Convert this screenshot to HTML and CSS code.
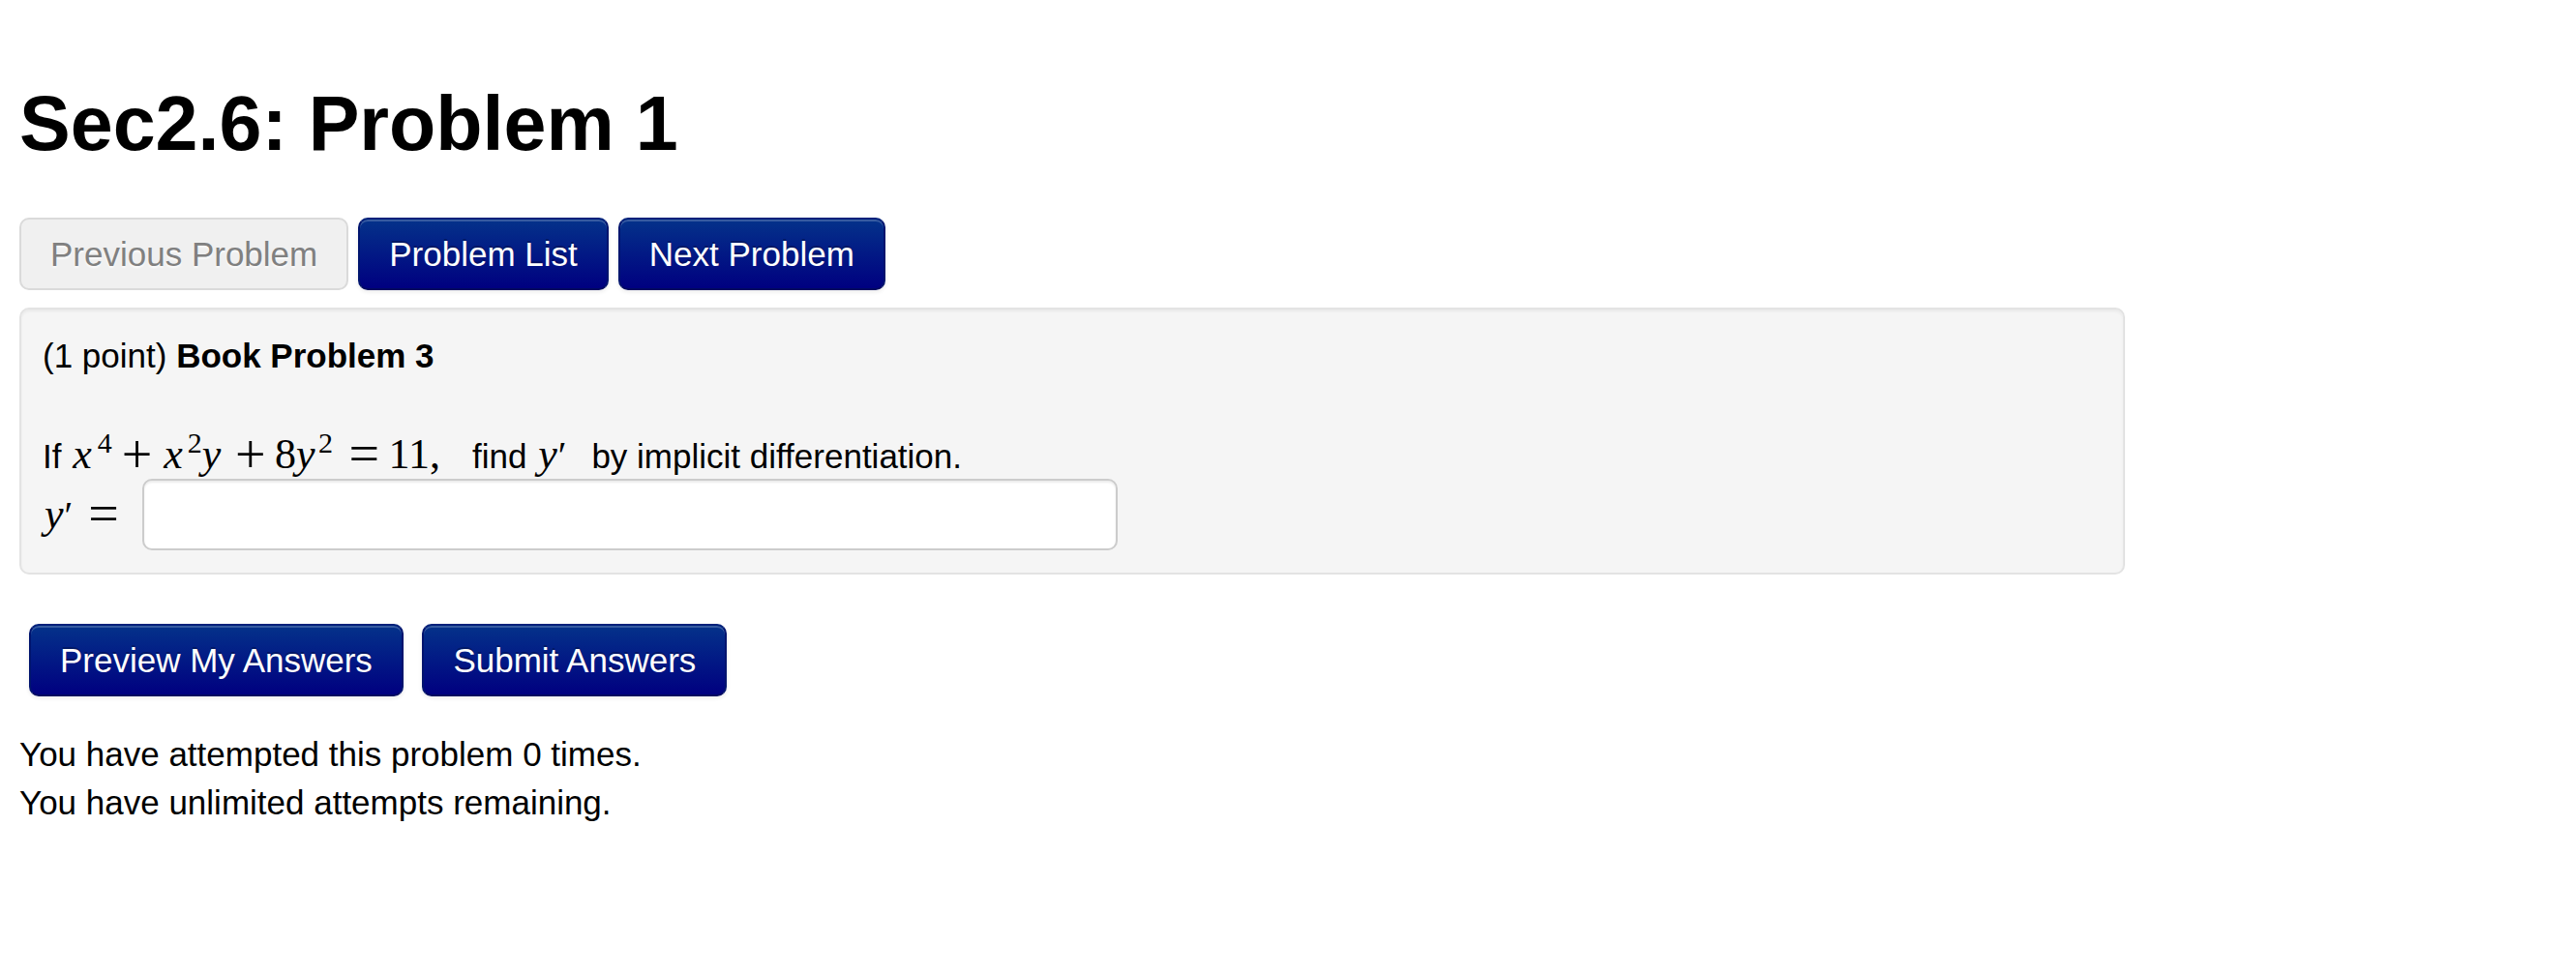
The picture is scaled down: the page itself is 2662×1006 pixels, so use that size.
FILE: index.html
```html
<!DOCTYPE html>
<html lang="en">
<head>
<meta charset="utf-8">
<title>Sec2.6: Problem 1</title>
<link rel="stylesheet" href="styles.css">
</head>
<body>
<h2 class="title">Sec2.6: Problem 1</h2>
<div class="nav">
  <span class="btn btn-disabled">Previous Problem</span>
  <span class="btn btn-primary">Problem List</span>
  <span class="btn btn-primary">Next Problem</span>
</div>
<div class="problem">
  <div class="line">(1 point) <b>Book Problem 3</b></div>
  <div class="line blank"></div>
  <div class="line stmt">If <span class="math"><i class="x1">x</i><sup class="s1">4</sup><span class="op o1">+</span><i class="x2">x</i><sup class="s2">2</sup><i class="y1">y</i><span class="op o2">+</span><span class="n8">8</span><i class="y2">y</i><sup class="s3">2</sup><span class="op rel">=</span><span class="n11">11,</span></span><span class="gap"></span>find <span class="math"><i class="y3">y</i><span class="prime">′</span></span><span class="gap2"></span>by implicit differentiation.</div>
  <div class="answer-row">
    <span class="math ans-label"><i class="y4">y</i><span class="prime">′</span><span class="op rel2">=</span></span>
    <input class="answer" type="text" aria-label="answer">
  </div>
</div>
<div class="actions">
  <span class="btn btn-primary">Preview My Answers</span>
  <span class="btn btn-primary">Submit Answers</span>
</div>
<div class="attempts">
  <div>You have attempted this problem 0 times.</div>
  <div>You have unlimited attempts remaining.</div>
</div>
</body>
</html>
```

FILE: styles.css
```css
html, body {
  margin: 0;
  background: #ffffff;
}
body {
  padding: 0 20px;
  font-family: "Liberation Sans", Arial, sans-serif;
  font-size: 35px;
  line-height: 50px;
  color: #000000;
}
.title {
  margin: 78px 0 0;
  font-size: 79px;
  line-height: 100px;
  font-weight: bold;
}
.nav {
  margin-top: 47px;
  display: flex;
  gap: 10px;
}
.btn {
  display: inline-block;
  box-sizing: border-box;
  height: 75px;
  padding: 10.5px 30px;
  border: 2px solid;
  border-radius: 10px;
  font-size: 35px;
  line-height: 50px;
  white-space: nowrap;
}
.btn-primary {
  color: #ffffff;
  background: linear-gradient(to bottom, #04328a 0%, #000080 100%);
  border-color: #00207a #00146e #000a60;
  box-shadow: inset 0 2px 0 rgba(255, 255, 255, 0.2), 0 2px 4px rgba(0, 0, 0, 0.08);
  text-shadow: 0 -2px 0 rgba(0, 0, 0, 0.25);
}
.btn-disabled {
  color: #808080;
  background: #f0f0f0;
  border-color: #dadada;
  text-shadow: 0 2px 2px rgba(255, 255, 255, 0.75);
}
.problem {
  margin-top: 18px;
  box-sizing: border-box;
  width: 2176px;
  padding: 23px 22px 23px 22px;
  background: #f5f5f5;
  border: 2px solid #e3e3e3;
  border-radius: 10px;
  box-shadow: inset 0 2px 3px rgba(0, 0, 0, 0.05);
}
.line {
  height: 50px;
  white-space: nowrap;
}
.blank {
  height: 52px;
}
.math {
  font-family: "Liberation Serif", "DejaVu Serif", serif;
  font-size: 44px;
}
.math i {
  font-style: italic;
}
.math sup {
  font-size: 30px;
  line-height: 0;
  vertical-align: 16px;
}
.op {
  font-size: 56px;
  line-height: 0;
  vertical-align: -5px;
}
.x1 { margin-left: 2px; }
.s1 { margin-left: 6px; }
.o1 { margin-left: 10px; }
.x2 { margin-left: 12px; }
.s2 { margin-left: 5px; }
.y1 { margin-left: 0; }
.o2 { margin-left: 14.5px; }
.n8 { margin-left: 9.5px; }
.y2 { margin-left: 0; }
.s3 { margin-left: 3.5px; }
.rel { margin-left: 16.5px; vertical-align: -4px; }
.n11 { margin-left: 9.5px; }
.prime {
  margin-left: 1px;
  font-size: 40px;
}
.gap {
  display: inline-block;
  width: 33px;
}
.y3 { margin-left: 2px; }
.gap2 {
  display: inline-block;
  width: 26px;
}
.answer-row {
  display: flex;
  align-items: center;
  height: 74px;
}
.ans-label {
  flex-shrink: 0;
  width: 102.5px;
}
.y4 { margin-left: 2px; }
.rel2 { margin-left: 16px; vertical-align: -4px; }
.answer {
  box-sizing: border-box;
  width: 1008px;
  height: 74px;
  margin: 0;
  border: 2px solid #cccccc;
  border-radius: 10px;
  background: #ffffff;
  box-shadow: inset 0 2px 2px rgba(0, 0, 0, 0.075);
  font-family: "Liberation Sans", Arial, sans-serif;
  font-size: 35px;
  padding: 0 10px;
}
.actions {
  margin-top: 51px;
  display: flex;
  gap: 19.5px;
  padding-left: 10px;
}
.attempts {
  margin-top: 35px;
}
```
